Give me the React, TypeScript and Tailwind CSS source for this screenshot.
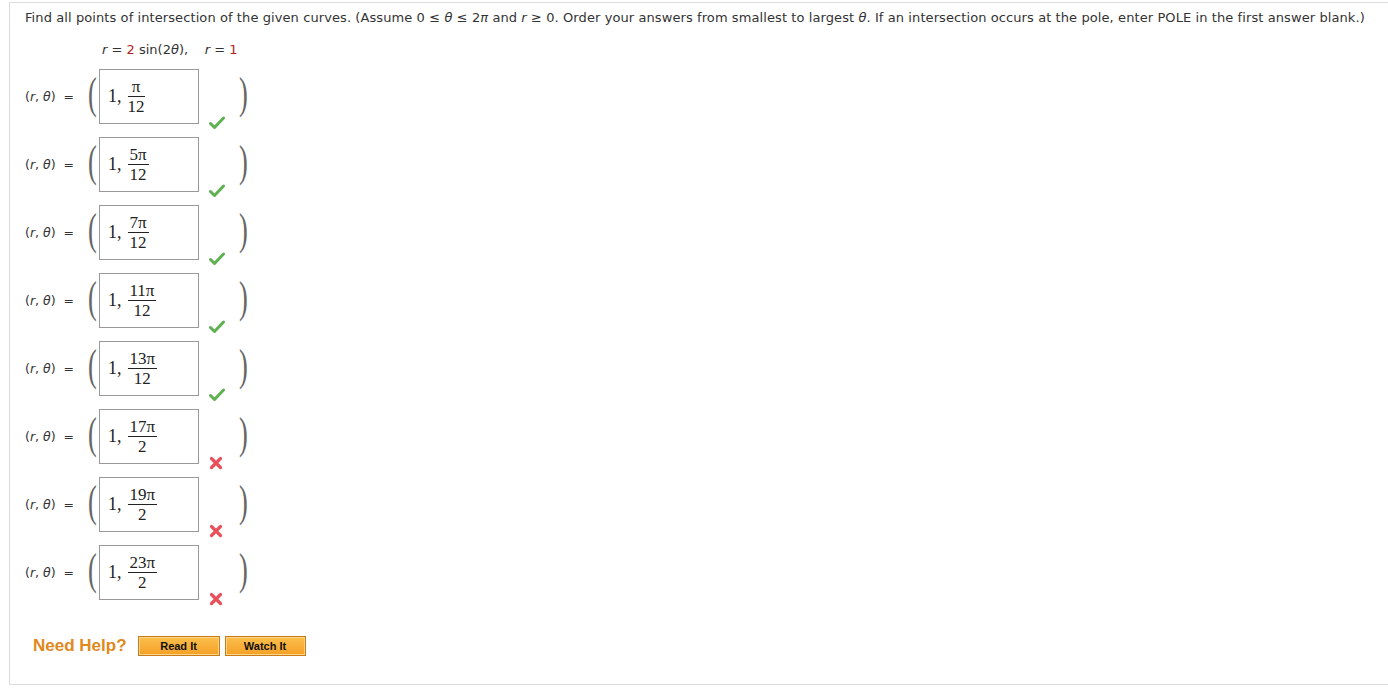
import React from "react";

interface Answer {
  num: string;
  den: string;
  correct: boolean;
}

const answers: Answer[] = [
  { num: "π", den: "12", correct: true },
  { num: "5π", den: "12", correct: true },
  { num: "7π", den: "12", correct: true },
  { num: "11π", den: "12", correct: true },
  { num: "13π", den: "12", correct: true },
  { num: "17π", den: "2", correct: false },
  { num: "19π", den: "2", correct: false },
  { num: "23π", den: "2", correct: false },
];

const Check = () => (
  <svg width="16" height="14" viewBox="0 0 16 14">
    <path
      d="M1.5 7.5 L5.5 11.5 L14.5 2"
      fill="none"
      stroke="#5fb04f"
      strokeWidth="3"
      strokeLinecap="round"
      strokeLinejoin="round"
    />
  </svg>
);

const Cross = () => (
  <svg width="14" height="14" viewBox="0 0 14 14">
    <path
      d="M2.5 2.5 L11.5 11.5 M11.5 2.5 L2.5 11.5"
      fill="none"
      stroke="#e8505b"
      strokeWidth="3.2"
      strokeLinecap="round"
    />
  </svg>
);

const Row: React.FC<{ answer: Answer }> = ({ answer }) => (
  <div className="flex h-[68px] items-center">
    <div className="w-[60px] pt-[2px] text-[12.5px] text-[#333] font-['DejaVu_Sans',sans-serif] whitespace-pre">
      (<i>r</i>, <i>θ</i>){"  "}=
    </div>
    <div className="w-[14px] flex justify-center">
      <span className="text-[44px] leading-none text-[#666] font-['Liberation_Serif',serif] scale-x-[0.6] -translate-y-[2px]">
        (
      </span>
    </div>
    <div className="w-[100px] h-[55px] border border-[#999] bg-white flex items-center pl-[8px] font-['Liberation_Serif',serif] text-[#222]">
      <span className="text-[18px] leading-none">1,</span>
      <span className="inline-flex flex-col items-center ml-[6px] mt-[1px]">
        <span className="text-[17px] leading-[17px] px-[2px] pb-[1px]">{answer.num}</span>
        <span className="self-stretch border-t border-[#222]" />
        <span className="text-[17px] leading-[17px] pt-[1px]">{answer.den}</span>
      </span>
    </div>
    <div className="w-[38px] self-end pl-[10px]">
      {answer.correct ? <Check /> : <Cross />}
    </div>
    <div className="w-[12px] flex justify-center">
      <span className="text-[44px] leading-none text-[#666] font-['Liberation_Serif',serif] scale-x-[0.6] -translate-y-[2px]">
        )
      </span>
    </div>
  </div>
);

export default function App() {
  return (
    <div className="bg-white min-h-[700px] pt-[2px]">
      <div className="ml-[9px] border-t border-l border-b border-[#dcdcdc] h-[683px] pl-[15px]">
        <p className="pt-[6px] text-[13px] tracking-[0.09px] text-[#333] font-['DejaVu_Sans',sans-serif] leading-[17px]">
          Find all points of intersection of the given curves. (Assume 0 ≤ <i>θ</i> ≤ 2<i>π</i> and{" "}
          <i>r</i> ≥ 0. Order your answers from smallest to largest <i>θ</i>. If an intersection
          occurs at the pole, enter POLE in the first answer blank.)
        </p>
        <p className="mt-[15px] pl-[77px] text-[13px] text-[#333] font-['DejaVu_Sans',sans-serif] leading-[17px] whitespace-pre">
          <i>r</i> = <span className="text-[#b22222]">2</span> sin(2<i>θ</i>),{"    "}
          <i>r</i> = <span className="text-[#b22222]">1</span>
        </p>
        <div className="mt-[4px]">
          {answers.map((a, i) => (
            <Row key={i} answer={a} />
          ))}
        </div>
        <div className="flex items-center mt-[27px] pl-[8px]">
          <span className="text-[17px] font-bold text-[#e0891c] font-['Liberation_Sans',sans-serif] mr-[11px]">
            Need Help?
          </span>
          <button className="w-[82px] h-[20px] mr-[5px] border border-[#c77a18] bg-gradient-to-b from-[#fbbf4c] to-[#f4a024] text-[11px] font-bold text-[#111] font-['Liberation_Sans',sans-serif] shadow-[inset_0_0_0_1px_#fcd58a]">
            Read It
          </button>
          <button className="w-[81px] h-[20px] border border-[#c77a18] bg-gradient-to-b from-[#fbbf4c] to-[#f4a024] text-[11px] font-bold text-[#111] font-['Liberation_Sans',sans-serif] shadow-[inset_0_0_0_1px_#fcd58a]">
            Watch It
          </button>
        </div>
      </div>
    </div>
  );
}
